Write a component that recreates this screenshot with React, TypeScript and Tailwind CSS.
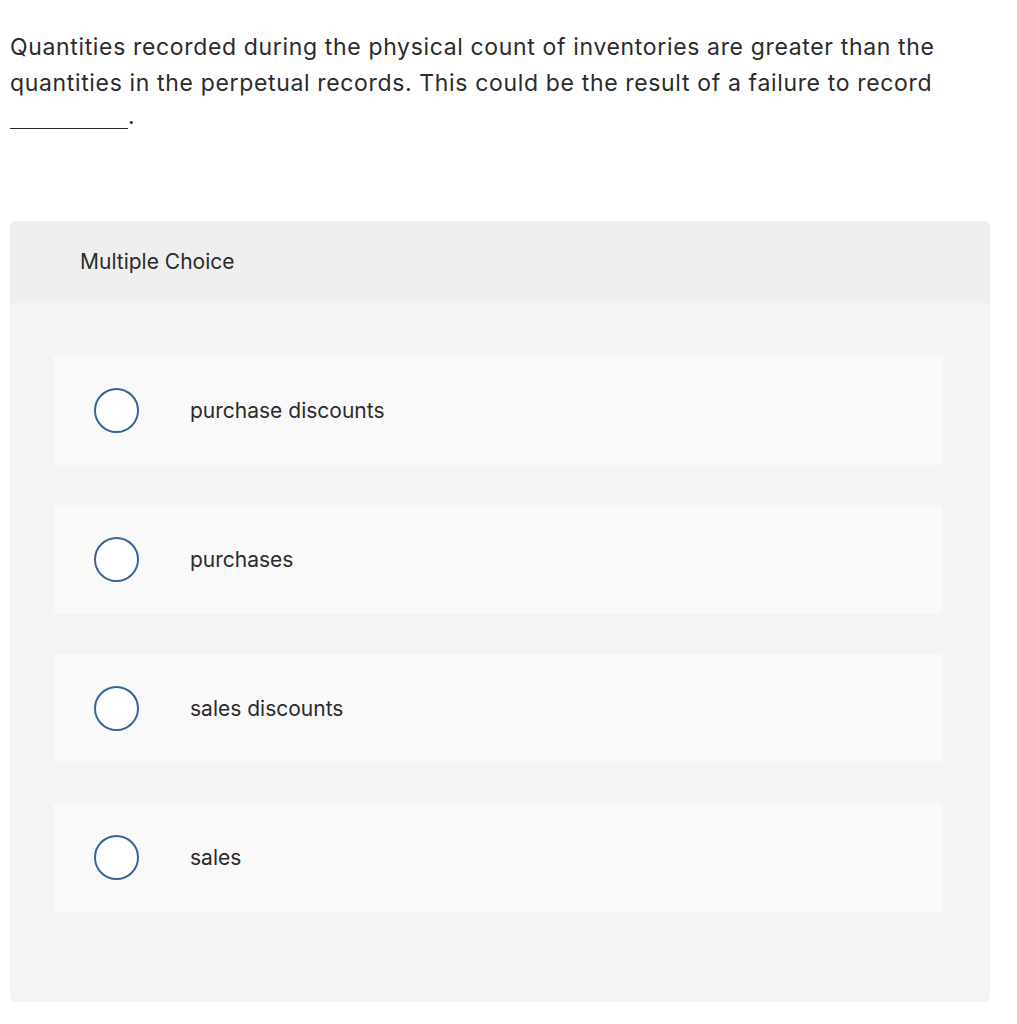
const options = ["purchase discounts", "purchases", "sales discounts", "sales"];

export default function App() {
  return (
    <div className="min-h-screen bg-white font-['Inter',sans-serif] text-[#2b2b2b]">
      {/* Question */}
      <div className="pl-[10px] pt-[29px]">
        <p className="text-[23px] leading-[36px] tracking-[0.65px] whitespace-nowrap">
          Quantities recorded during the physical count of inventories are greater than the
          <br />
          quantities in the perpetual records. This could be the result of a failure to record
        </p>
        <div className="mt-[3px] flex items-end h-[30px]">
          <span className="inline-block w-[118px] border-b border-[#2b2b2b] mb-[5px]" />
          <span className="text-[23px] leading-[36px]">.</span>
        </div>
      </div>

      {/* Multiple choice panel */}
      <div className="ml-[10px] mr-[27px] mt-[87px] rounded-[6px] overflow-hidden bg-[#f4f4f4]">
        <div className="h-[82px] bg-[#efefef] flex items-center pl-[70px]">
          <span className="text-[21px]">Multiple Choice</span>
        </div>
        <div className="pl-[43px] pr-[47px] pt-[53px] pb-[90px] flex flex-col gap-[40px]">
          {options.map((opt) => (
            <div key={opt} className="h-[109px] rounded-[4px] bg-[#f9f9f9] flex items-center">
              <span className="ml-[41px] w-[45px] h-[45px] rounded-full border-2 border-[#3b6397] bg-white shrink-0" />
              <span className="ml-[51px] text-[21px]">{opt}</span>
            </div>
          ))}
        </div>
      </div>
    </div>
  );
}
